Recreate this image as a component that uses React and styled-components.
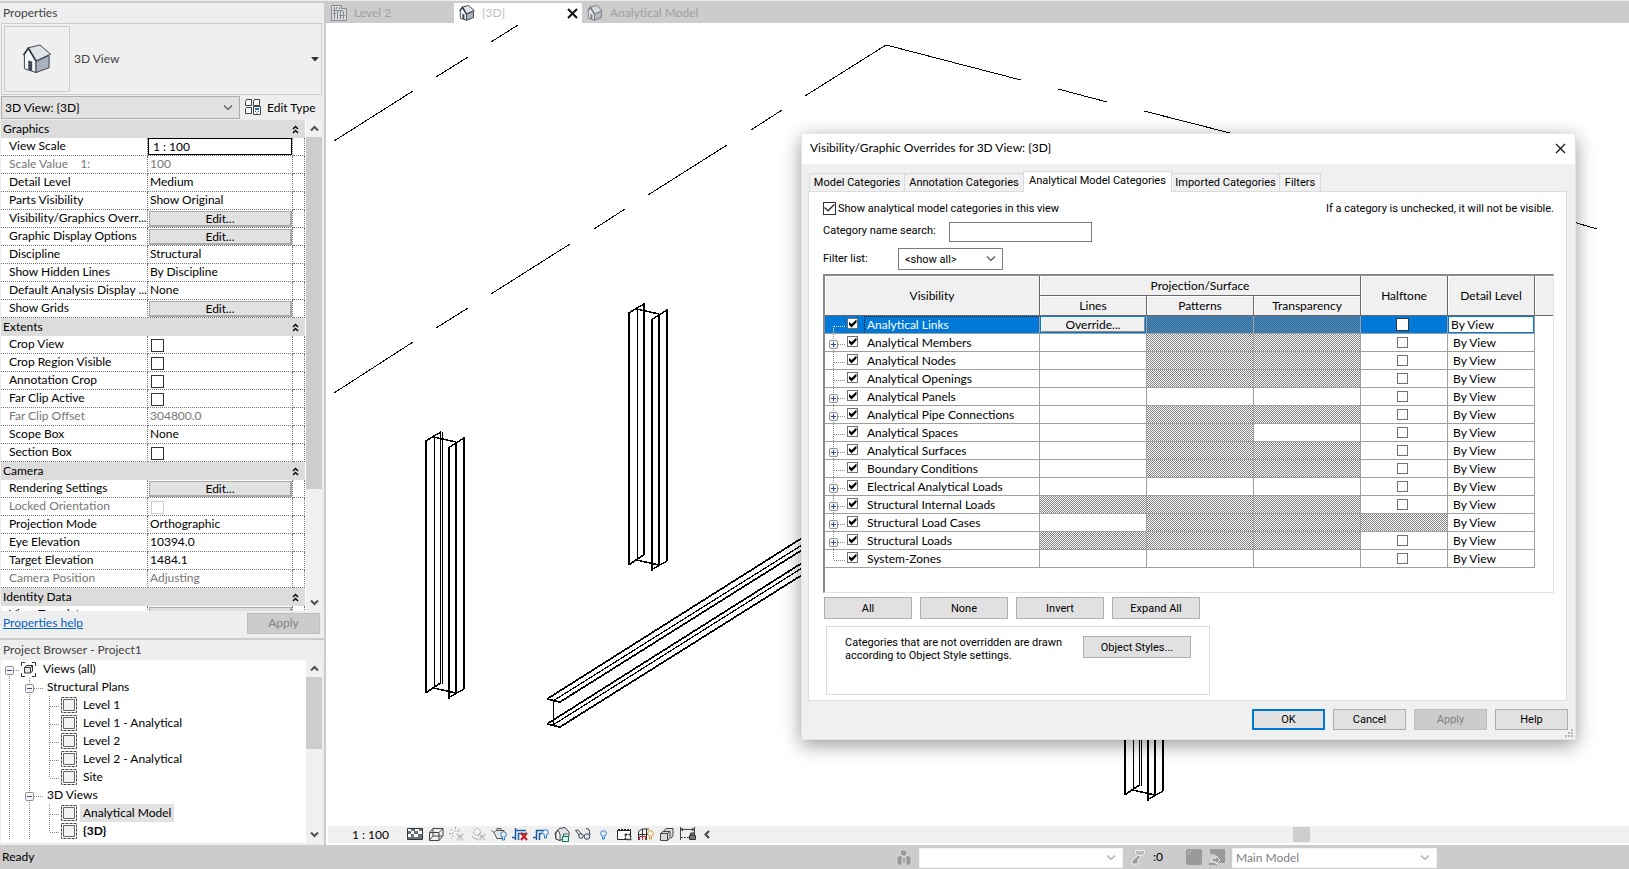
import React, { useState } from 'react';
import styled, { createGlobalStyle, css } from 'styled-components';

const uiFont = '12px/16px Lato, "Open Sans", "Noto Sans", sans-serif';
const dialogFont = '11px/13px Roboto, "Noto Sans", sans-serif';

const GlobalStyle = createGlobalStyle`
  * {
    box-sizing: border-box;
  }

  body {
    margin: 0;
    overflow: hidden;
    font: ${uiFont};
    color: #000;
  }

  button,
  input,
  select {
    margin: 0;
    padding: 0;
    border-radius: 0;
    font: inherit;
    color: inherit;
  }

  svg {
    display: block;
    flex-shrink: 0;
  }
`;

const Root = styled.div`
  display: flex;
  flex-direction: column;
  height: 100vh;
  background: #ccc;
`;

const TopEdge = styled.div`
  flex: 0 0 3px;
  border-top: 1px solid #ededed;
`;

const Workspace = styled.div`
  display: flex;
  flex: 1;
  min-height: 0;
`;

/* ---------- side panels ---------- */

const Sidebar = styled.aside`
  display: flex;
  flex: 0 0 326px;
  flex-direction: column;
  gap: 2px;
  border-right: 2px solid #ccc;
`;

const Panel = styled.section`
  display: flex;
  flex-direction: column;
  min-height: 0;
  flex: ${(props) => props.$size};
  padding-bottom: ${(props) => (props.$footGap ? 2 : 0)}px;
  background: #eee;
`;

const PanelTitle = styled.h2`
  flex: 0 0 20px;
  margin: 0;
  padding-left: 3px;
  font-size: 12px;
  font-weight: normal;
  line-height: 20px;
  color: #444;
`;

const TypeSelector = styled.button`
  display: flex;
  align-items: center;
  flex: 0 0 72px;
  margin: 0 2px 0 1px;
  padding: 0 2px;
  gap: 4px;
  border: 1px solid #ccc;
  background: #efefef;
  text-align: left;
  color: #444;
`;

const TypePreview = styled.span`
  display: flex;
  align-items: center;
  justify-content: center;
  width: 66px;
  height: 66px;
  border: 1px solid #ccc;
`;

const TypeName = styled.span`
  flex: 1;
`;

const InstanceRow = styled.div`
  display: flex;
  align-items: center;
  flex: 0 0 25px;
  gap: 5px;
  padding-left: 1px;
`;

const ComboBox = styled.span`
  display: grid;
  grid-template-columns: 1fr 18px;
  align-items: center;
  width: ${(props) => props.$width}px;
  height: ${(props) => props.$height}px;

  select {
    grid-area: 1 / 1 / 2 / 3;
    width: 100%;
    height: 100%;
    padding-left: ${(props) => props.$pad || 3}px;
    appearance: none;
    border: 1px solid ${(props) => props.$border};
    background: ${(props) => props.$fill || '#fff'};
    color: ${(props) => props.$color || '#000'};
    opacity: 1;
    outline: none;
  }

  svg {
    grid-area: 1 / 2;
    pointer-events: none;
  }
`;

const FlatButton = styled.button`
  display: flex;
  align-items: center;
  gap: 5px;
  border: 0;
  background: transparent;
`;

const ScrollArea = styled.div`
  display: flex;
  flex: 1;
  min-height: 0;
  padding: 0 2px 0 1px;
`;

const ScrollContent = styled.div`
  flex: 1;
  min-width: 0;
  overflow: hidden;
  background: #fff;
`;

const ScrollBar = styled.div`
  display: flex;
  flex: 0 0 16px;
  flex-direction: column;
  align-items: center;
  background: #f0f0f0;
`;

const ScrollArrow = styled.button`
  display: flex;
  align-items: center;
  justify-content: center;
  width: 100%;
  height: 17px;
  border: 0;
  background: transparent;
`;

const ScrollTrack = styled.div`
  flex: 1;
  width: 100%;
`;

const ScrollThumb = styled.div`
  height: ${(props) => props.$size};
  background: #cdcdcd;
`;

const PropertyTable = styled.table`
  width: 304px;
  table-layout: fixed;
  border-spacing: 0;

  th,
  td {
    height: 18px;
    padding: 0;
    overflow: hidden;
    font-weight: normal;
    text-align: left;
    line-height: 16px;
    white-space: pre;
    vertical-align: top;
  }
`;

const GroupHeader = styled.th`
  background: #dcdcdc;
`;

const GroupHeaderInner = styled.span`
  display: flex;
  align-items: center;
  justify-content: space-between;
  height: 18px;
  padding: 0 6px 0 2px;
`;

const PropertyName = styled.th`
  border-right: 1px dotted #777;
  border-bottom: 1px dotted #777;
  color: ${(props) => (props.$dim ? '#777' : '#000')};

  && {
    padding-left: 8px;
  }
`;

const PropertyCell = styled.td`
  border-right: 1px dotted #777;
  border-bottom: 1px dotted #777;
  color: ${(props) => (props.$dim ? '#777' : '#000')};

  && {
    padding-left: ${(props) => (props.$text ? 2 : 0)}px;
  }
`;

const ScaleInput = styled.input`
  display: block;
  width: 100%;
  height: 17px;
  padding-left: 4px;
  border: 1px solid #000;
  background: #fff;
  outline: none;
`;

const EditButton = styled.button`
  display: block;
  width: 143px;
  height: 16px;
  margin: 1px 0 0 1px;
  border: solid #a9a9a9;
  border-width: 1px 2px 2px 1px;
  background: #e1e1e1;
  line-height: 13px;
`;

const PropertyCheck = styled.input.attrs({ type: 'checkbox' })`
  display: block;
  width: 13px;
  height: 13px;
  margin: 3px 0 0 3px;
  appearance: none;
  border: 1px solid #333;
  background: #fff;

  &:disabled {
    border-color: #ccc;
  }
`;

const PanelFooter = styled.div`
  display: flex;
  align-items: center;
  justify-content: space-between;
  flex: 0 0 27px;
  padding: 0 4px 3px 3px;
`;

const HelpLink = styled.a`
  color: #0563c1;
`;

const TreeRow = styled.div`
  display: flex;
  align-items: center;
  height: 18px;
`;

const TreeToggle = styled.button`
  flex-shrink: 0;
  border: 0;
  background: transparent;
`;

const TreeLabel = styled.span`
  padding: 0 3px;
  line-height: 18px;
  background: ${(props) => (props.$selected ? '#e2e2e2' : 'transparent')};
  font-weight: ${(props) => (props.$bold ? 'bold' : 'normal')};
  margin-left: ${(props) => props.$gap}px;
`;

/* ---------- drawing area ---------- */

const ViewArea = styled.main`
  position: relative;
  display: flex;
  flex: 1;
  flex-direction: column;
  min-width: 0;
  background: #fff;
`;

const ViewTabs = styled.div`
  display: flex;
  flex: 0 0 20px;
  background: #ccc;
`;

const ViewTab = styled.div`
  display: flex;
  align-items: center;
  width: ${(props) => (props.$wide ? 140 : 128)}px;
  padding: 0 4px 0 5px;
  background: ${(props) => (props.$active ? '#fff' : 'transparent')};
`;

const ViewTabButton = styled.button`
  display: flex;
  align-items: center;
  flex: 1;
  gap: 7px;
  border: 0;
  background: transparent;
  color: ${(props) => (props.$active ? '#c0c0c0' : '#a0a0a0')};
  white-space: nowrap;
`;

const Canvas = styled.div`
  flex: 1;
  min-height: 0;
  overflow: hidden;
`;

const ViewControlBar = styled.div`
  display: flex;
  align-items: center;
  flex: 0 0 17px;
  gap: 5px;
  margin: 0 0 2px 2px;
  background: #f0f0f0;
`;

const ViewScale = styled.button`
  width: 74px;
  border: 0;
  background: transparent;
  padding-left: 11px;
`;

const ToolButton = styled.button`
  width: 16px;
  height: 16px;
  border: 0;
  background: transparent;
`;

const HorizontalTrack = styled.div`
  display: flex;
  flex: 1;
  height: 15px;

  &::before {
    content: '';
    width: 63%;
  }
`;

const HorizontalThumb = styled.div`
  width: 17px;
  height: 100%;
  background: #cdcdcd;
`;

/* ---------- status bar ---------- */

const StatusBar = styled.footer`
  display: grid;
  grid-template-columns: 55% 1fr;
  align-items: center;
  flex: 0 0 23px;
  line-height: 24px;
`;

const StatusText = styled.span`
  padding-left: 2px;
`;

const StatusTools = styled.div`
  display: flex;
  align-items: center;
  gap: 7px;
  line-height: 18px;
`;

const SelectionCount = styled.span`
  width: 26px;
`;

/* ---------- dialog ---------- */

const Dialog = styled.div`
  position: absolute;
  top: 130px;
  left: 475px;
  width: 775px;
  padding-bottom: 9px;
  border: 1px solid #e4e4e4;
  background: #f0f0f0;
  box-shadow: 0 5px 18px rgba(0, 0, 0, 0.4);
  font: ${dialogFont};
`;

const DialogTitle = styled.header`
  display: flex;
  align-items: center;
  justify-content: space-between;
  height: 30px;
  padding: 0 9px 2px 8px;
  background: #fff;
  font: ${uiFont};
`;

const DialogTabs = styled.div`
  display: flex;
  align-items: flex-end;
  height: 27px;
  padding-left: 8px;
`;

const DialogTab = styled.button`
  height: ${(props) => (props.$active ? 21 : 18)}px;
  width: ${(props) => props.$width}px;
  border: 1px solid #d9d9d9;
  border-bottom: 0;
  margin-left: -1px;
  background: ${(props) => (props.$active ? '#fff' : '#f0f0f0')};
  margin-bottom: ${(props) => (props.$active ? -1 : 0)}px;
  padding-bottom: ${(props) => (props.$active ? 3 : 0)}px;
  white-space: nowrap;
`;

const DialogPage = styled.div`
  margin: 0 8px 8px 6px;
  padding: 9px 12px 5px 14px;
  border: 1px solid #dcdcdc;
  background: #fff;
`;

const PageRow = styled.div`
  display: flex;
  align-items: center;
  justify-content: ${(props) => (props.$spread ? 'space-between' : 'flex-start')};
  height: ${(props) => props.$height}px;
`;

const CheckLabel = styled.label`
  display: flex;
  align-items: center;
  gap: 2px;
`;

const DialogCheck = styled.input.attrs({ type: 'checkbox' })`
  display: grid;
  place-items: center;
  width: 13px;
  height: 13px;
  appearance: none;
  border: 1px solid #333;
  background: #fff;

  &:checked::after {
    content: '';
    width: 11px;
    height: 9px;
    background: #333;
    clip-path: polygon(0 50%, 9% 38%, 36% 70%, 90% 6%, 100% 14%, 37% 92%);
  }
`;

const FieldLabel = styled.label`
  width: ${(props) => props.$width}px;
  padding-bottom: 2px;
`;

const SearchInput = styled.input.attrs({ type: 'text' })`
  width: 143px;
  height: 20px;
  padding: 0 4px;
  border: 1px solid #7a7a7a;
  background: #fff;
`;

const GridFrame = styled.div`
  height: 319px;
  margin-top: 4px;
  border: 2px solid #8a8a8a;
  border-right: 1px solid #e3e3e3;
  border-bottom: 1px solid #e3e3e3;
  font: ${uiFont};
`;

const CategoryTable = styled.table`
  width: 728px;
  table-layout: fixed;
  border-spacing: 0;

  th,
  td {
    padding: 0;
    font-weight: normal;
    white-space: nowrap;
  }
`;

const HeadCell = styled.th`
  height: 20px;
  border-right: ${(props) => (props.$open ? 0 : 1)}px solid #696969;
  border-bottom: 1px solid #696969;
  background: #f0f0f0;
  box-shadow: inset 1px 1px 0 #fff;
  line-height: 18px;
`;

const hatch = css`
  background: repeating-conic-gradient(#808080 0 25%, ${(props) => (props.$selected ? '#0078d7' : '#fff')} 0 50%) 0 0 / 2px
    2px;
`;

const Cell = styled.td`
  height: 18px;
  border-right: 1px solid #a0a0a0;
  border-bottom: 1px solid #a0a0a0;
  background: ${(props) => (props.$selected ? '#0078d7' : '#fff')};
  ${(props) => props.$hatched && hatch}
`;

const NameRow = styled.div`
  display: flex;
  align-items: center;
  height: 17px;
  color: ${(props) => (props.$selected ? '#fff' : '#000')};
`;

const NameText = styled.span`
  flex: 1;
  height: 17px;
  margin-left: 6px;
  padding-left: 2px;
  line-height: 15px;
  border: ${(props) => (props.$selected ? '1px dotted #222' : '1px solid transparent')};
  border-width: 1px 0 0 1px;
`;

const GridCheck = styled.input.attrs({ type: 'checkbox' })`
  display: grid;
  place-items: center;
  width: ${(props) => (props.$large ? 13 : 11)}px;
  height: ${(props) => (props.$large ? 13 : 11)}px;
  margin: ${(props) => (props.$halftone ? `0 0 0 ${props.$large ? 35 : 36}px` : '0 0 2px')};
  appearance: none;
  border: 1px solid ${(props) => (props.$large ? '#333' : '#707070')};
  background: #fff;

  &:checked::after {
    content: '';
    width: 8px;
    height: 8px;
    background: #000;
    clip-path: polygon(0 25%, 38% 55%, 100% 0, 100% 38%, 38% 100%, 0 62%);
  }
`;

const OverrideButton = styled.button`
  display: block;
  width: 104px;
  height: 15px;
  margin: 0 auto;
  border: 1px solid #fff;
  border-right: 1px solid #888;
  border-bottom: 1px solid #888;
  background: #f0f0f0;
  line-height: 12px;
`;

const DetailText = styled.span`
  display: block;
  padding-left: 5px;
  line-height: 16px;
`;

const DetailSelect = styled.select`
  display: block;
  width: 86px;
  height: 17px;
  padding-left: 2px;
  appearance: none;
  border: 1px solid #0078d7;
  background: #fff;
  outline: none;
`;

const ButtonRow = styled.div`
  display: flex;
  gap: 8px;
  justify-content: ${(props) => (props.$end ? 'flex-end' : 'flex-start')};
  padding: ${(props) => (props.$end ? '0 7px 0 0' : '4px 0 7px 1px')};
`;

const Button = styled.button`
  width: ${(props) => props.$width}px;
  height: ${(props) => props.$height || 22}px;
  border: ${(props) => (props.$primary ? '2px solid #0078d7' : '1px solid #adadad')};
  background: #e1e1e1;

  &:disabled {
    border-color: #bfbfbf;
    background: #ccc;
    color: #838383;
  }
`;

const StyleBox = styled.div`
  display: flex;
  align-items: flex-start;
  gap: 14px;
  width: 384px;
  height: 69px;
  margin-left: 3px;
  padding: 9px 18px 0 18px;
  border: 1px solid #dcdcdc;
`;

const StyleNote = styled.p`
  flex: 1;
  margin: 0;
  white-space: nowrap;
`;

const Grip = styled.div`
  position: absolute;
  right: 2px;
  bottom: 2px;
`;

/* ---------- icons ---------- */

function HouseIcon({ size, faded }) {
  const line = size < 20 ? 1.8 : 1;
  return (
    <svg width={size} height={size} viewBox="0 0 30 31" opacity={faded ? 0.55 : 1} strokeWidth={line}>
      <path d="M2 11 6 5l8 12.500v12L2 25.500z" fill="#f4f5f7" stroke="#3a3f4a" />
      <path d="M14 18 27.500 12v12.500L14 29.500z" fill="#a9b2bf" stroke="#3a3f4a" />
      <path d="M6 4 18 1l11 9.500L14 17.500z" fill="#dfe3e8" stroke="#3a3f4a" strokeLinejoin="round" />
      <path d="M1 11.500 6 4.200l8 13.300" fill="none" stroke="#2d323c" strokeWidth={line + 0.6} />
      <path d="m6 17 4 1.200V28l-4-1.500z" fill="#414957" />
    </svg>
  );
}

function PlanIcon() {
  return (
    <svg width="16" height="16" fill="none" stroke="#8a8d94">
      <path d="M.5 3.500v-3h10v3h5v12H.5z" fill="#d8d9db" />
      <path d="M3.500 2v12M5.500 2v2M8.500 2v2M6.500 6v8M9.500 6v8M12.500 6v8M2 5.500h10M2 8.500h3M8 10.500h6" />
    </svg>
  );
}

function Chevron({ color = '#555' }) {
  return (
    <svg width="12" height="8" fill="none" stroke={color} strokeWidth="1.200">
      <path d="m2 1.500 4 4 4-4" />
    </svg>
  );
}

function ArrowIcon({ down }) {
  return (
    <svg width="9" height="7" fill="none" stroke="#505050" strokeWidth="2">
      <path d={down ? 'm1 1.500 3.500 3.500L8 1.500' : 'M1 5.500 4.500 2 8 5.500'} />
    </svg>
  );
}

function CollapseIcon() {
  return (
    <svg width="7" height="9" fill="none" stroke="#000" strokeWidth="1.400">
      <path d="m1 4 2.500-2.500L6 4M1 8l2.500-2.500L6 8" />
    </svg>
  );
}

function EditTypeIcon() {
  return (
    <svg width="17" height="17" fill="#fafafa" stroke="#3f434b">
      <path d="M.5 2.500l1-2h5v6h-6zM8.500 2.500l1-2h5v6h-6zM.5 9.500l1-1h5v6h-6z" />
      <path d="M8.500 7.500h7v8h-7z" fill="#fff" />
      <path d="M10 10h4" stroke="#1a6fc4" strokeWidth="2" />
      <path d="M10 12.500h1M13 12.500h1M11.500 14h1" />
    </svg>
  );
}

function CloseIcon({ bold }) {
  return (
    <svg width="11" height="11" stroke="#111" strokeWidth={bold ? 2 : 1.2}>
      <path d="m1 1 9 9m0-9-9 9" />
    </svg>
  );
}

function SheetIcon() {
  return (
    <svg width="16" height="16" fill="none" stroke="#444">
      <path d="M.5.500h15v15H.5z" strokeDasharray="3 1" />
      <path d="M2.500 2.500h11v11h-11z" fill="#f2f2f2" stroke="#666" />
    </svg>
  );
}

function ViewsIcon() {
  return (
    <svg width="15" height="15" fill="none" stroke="#333">
      <path d="M.5 4V.5H4M11 .5h3.500V4M.5 11v3.500H4M11 14.500h3.500V11" />
      <path d="M3.500 5.500 5.500 3.500h6v5.500l-2 2h-6zM3.500 5.500h6v5.500M9.500 5.500l2-2" fill="#e6e8eb" />
    </svg>
  );
}

// One cell of the dotted tree outline, with an optional +/- box
function TreeMark({ above, below, right, box, width = 20, color = '#888' }) {
  return (
    <svg width={width} height="18" fill="none" stroke={color}>
      <g strokeDasharray="1 1">
        {above && <path d="M8.500 0v10" />}
        {below && <path d="M8.500 10v8" />}
        {right && <path d={`M9 10.500h${width - 10}`} />}
      </g>
      {box && (
        <g>
          <rect x="4.500" y="6.500" width="8" height="8" rx="1" fill="#f4f4f4" stroke="#8c8c8c" />
          <path d={box === 'plus' ? 'M6 10.500h5M8.500 8v5' : 'M6 10.500h5'} stroke="#2c4c9c" />
        </g>
      )}
    </svg>
  );
}

function Bulb({ x = 0, y = 0, color = '#2a7ac8' }) {
  return (
    <g transform={`translate(${x} ${y})`} stroke={color} fill="#eaf4ff">
      <circle cx="3.500" cy="3.500" r="2.800" />
      <path d="M2.500 6.500v2.500h2V6.500" />
    </g>
  );
}

const tools = [
  {
    name: 'Detail Level',
    art: (
      <>
        <path d="M.5 1.500h15v11H.5z" fill="#fff" stroke="#333" />
        <path d="M1 4h3v3H1zM4 2h4v2H4zM7 4h4v3H7zM4 7h3v3H4zM11 7h4v3h-4zM12 2h3v2h-3zM1 10h14v2H1z" fill="#667180" />
      </>
    ),
  },
  {
    name: 'Visual Style',
    art: <path d="M1.500 5.500 5 1.500h10v7L11 13.500H1.500zM1.500 5.500H11v8M11 5.500l4-4M5 1.500v7.500h10M5 9l-3.500 4" fill="none" stroke="#444" />,
  },
  {
    name: 'Sun Path Off',
    art: (
      <g stroke="#a5a5a5" fill="none">
        <path d="M4 10a4 4 0 0 1 2-6 4 4 0 0 1 4 1M6.500 0v2M0 6.500h2M2 2l1.500 1.500M11 2 9.500 3.500M2 12l1-1" strokeDasharray="2 1" />
        <path d="m8 7 6 6m0-6-6 6" strokeWidth="2" strokeDasharray="1 1" />
      </g>
    ),
  },
  {
    name: 'Shadows Off',
    art: (
      <g stroke="#a5a5a5" fill="none">
        <circle cx="7" cy="5" r="3.500" strokeDasharray="2 1" />
        <path d="M2 9c2 3 4 3 6 3" />
        <path d="m9 7 6 6m0-6-6 6" strokeWidth="2" strokeDasharray="1 1" />
      </g>
    ),
  },
  {
    name: 'Show Rendering Dialog',
    art: (
      <>
        <path d="M.5 3.500 3 5.500l3 6h5l2-8H5L3 5.500M6 3V1.500h4V3" fill="#e3e5e8" stroke="#555" />
        <Bulb x={9} y={4} />
      </>
    ),
  },
  {
    name: 'Crop View',
    art: (
      <>
        <path d="M0 10.500h3M3.500 13V3.500H14M6.500 13V6.500H15M3.500 3.500V1" stroke="#1f5f9f" fill="none" strokeWidth="1.500" />
        <path d="m9 6 6 7m0-7-6 7" stroke="#c6181c" strokeWidth="2" />
      </>
    ),
  },
  {
    name: 'Show Crop Region',
    art: (
      <>
        <path d="M0 10.500h3M3.500 13V3.500H11M6.500 13V6.500H9" stroke="#1f5f9f" fill="none" strokeWidth="1.500" />
        <Bulb x={9} y={2} />
      </>
    ),
  },
  {
    name: 'Unlocked 3D View',
    art: (
      <>
        <path d="m1 6 4-4.500L11 .5 15 5v4L6 13.500 2 12z" fill="#dfe2e6" stroke="#444" />
        <path d="M2 6v6l4 1.500V7.500L4 3z" fill="#fff" stroke="#444" />
        <path d="M8.500 9.500h6v5h-6zM9.500 9V7h4" fill="#d8efea" stroke="#1b6d62" />
      </>
    ),
  },
  {
    name: 'Temporary Hide/Isolate',
    art: (
      <g fill="#d5e7f5" stroke="#3c4450">
        <path d="M4 8 .5 3.500 3 3l5 6M15 8l-1-5.500-3-1" fill="none" />
        <circle cx="6" cy="9" r="2.300" />
        <circle cx="12" cy="9.500" r="2.800" />
      </g>
    ),
  },
  { name: 'Reveal Hidden Elements', art: <Bulb x={4} y={3} /> },
  {
    name: 'Temporary View Properties',
    art: (
      <g fill="#fff" stroke="#222">
        <path d="M.5 3.500h13v9H.5z" />
        <path d="M1 2.500h13" strokeDasharray="2 1" />
        <path d="M8.500 7.500h5v5h-5z" strokeWidth="1.500" strokeDasharray="2 1" />
      </g>
    ),
  },
  {
    name: 'Analytical Model',
    art: (
      <>
        <path d="M.5 13V4.500L4 2h7M4.500 13V2M.5 7.500h11M8.500 13V2" fill="none" stroke="#333" />
        <path d="M1.500 13V9.500h6V13M4.500 9.500V13" fill="none" stroke="#c03030" />
        <Bulb x={9} y={3} color="#e39a1c" />
      </>
    ),
  },
  {
    name: 'Highlight Displacement Sets',
    art: (
      <g fill="#d9dbdf" stroke="#444">
        <path d="M4.500 4.500 7 1.500h7v7l-2 3" />
        <path d="M1.500 6.500 4 4.500h7v6l-2.500 3h-7zM1.500 6.500h7v7M8.500 6.500l2.500-2" />
      </g>
    ),
  },
  {
    name: 'Reveal Constraints',
    art: (
      <>
        <path d="M.5 0v13M14.500 0v6M1 2.500h13M3 1 1 2.500 3 4M12 1l2 1.500L12 4" fill="none" stroke="#444" />
        <path d="M1 10.500h8" stroke="#444" strokeDasharray="2 1" />
        <path d="M9.500 8.500h6v4h-6zM10.500 8V6h4v2" fill="#777" stroke="#333" />
      </>
    ),
  },
  { name: 'Collapse', art: <path d="M8 4 4.500 7.500 8 11" fill="none" stroke="#444" strokeWidth="2" /> },
];

/* ---------- model drawing ---------- */

const gridDashes =
  'M334 141 413 91M436 77l32-20M491 42l27-17M334 393l79-51M436 328l32-20M491 294l79-50M594 229l31-20M648 195l79-50M751 130l31-20M805 96l81-51 135 35M1058 89l49 13M1144 111l86 22M1570 221l27 8';

function SteelColumn({ x, y, length, thinEdge }) {
  return (
    <g transform={`translate(${x} ${y})`}>
      <path d={`M.5 10 16 1M23 17 39 7M8.500 6 31 11M.5 ${length + 10}l15-10M8.500 ${length + 5} 31 ${length + 10}M23 ${length + 15}l16-9`} strokeWidth="1.500" />
      <path d={`M9.500 6v${length}`} />
      {thinEdge ? (
        <path d={`M15.500 1v${length}M17.500 1v${length}`} />
      ) : (
        <path d={`M16 0v${length}`} strokeWidth="2" />
      )}
      <path d={`M1 10v${length}M24 16v${length}M31 11v${length}M39 6v${length}`} strokeWidth="2" />
    </g>
  );
}

function ModelDrawing() {
  return (
    <svg width="1303" height="804" viewBox="326 23 1303 804" fill="none" stroke="#000" shapeRendering="crispEdges">
      <path d={gridDashes} />
      <SteelColumn x={425} y={431} length={252} thinEdge />
      <SteelColumn x={628} y={303} length={252} />
      <SteelColumn x={1124} y={533} length={252} thinEdge />
      <path d="M547 699l255-161M560 702l242-152M547 724l255-161M560 727l242-152M547 699l13 3M547 724l13 3" strokeWidth="1.700" />
      <path d="M553 701l249-156M553 725l249-157M553.500 701v24" strokeWidth="1.200" />
    </svg>
  );
}

/* ---------- data ---------- */

const propertyGroups = [
  {
    title: 'Graphics',
    rows: [
      { name: 'View Scale', kind: 'input', value: '1 : 100' },
      { name: 'Scale Value    1:', value: '100', dim: true },
      { name: 'Detail Level', value: 'Medium' },
      { name: 'Parts Visibility', value: 'Show Original' },
      { name: 'Visibility/Graphics Overr...', kind: 'button', value: 'Edit...' },
      { name: 'Graphic Display Options', kind: 'button', value: 'Edit...' },
      { name: 'Discipline', value: 'Structural' },
      { name: 'Show Hidden Lines', value: 'By Discipline' },
      { name: 'Default Analysis Display ...', value: 'None' },
      { name: 'Show Grids', kind: 'button', value: 'Edit...' },
    ],
  },
  {
    title: 'Extents',
    rows: [
      { name: 'Crop View', kind: 'check' },
      { name: 'Crop Region Visible', kind: 'check' },
      { name: 'Annotation Crop', kind: 'check' },
      { name: 'Far Clip Active', kind: 'check' },
      { name: 'Far Clip Offset', value: '304800.0', dim: true },
      { name: 'Scope Box', value: 'None' },
      { name: 'Section Box', kind: 'check' },
    ],
  },
  {
    title: 'Camera',
    rows: [
      { name: 'Rendering Settings', kind: 'button', value: 'Edit...' },
      { name: 'Locked Orientation', kind: 'check', dim: true },
      { name: 'Projection Mode', value: 'Orthographic' },
      { name: 'Eye Elevation', value: '10394.0' },
      { name: 'Target Elevation', value: '1484.1' },
      { name: 'Camera Position', value: 'Adjusting', dim: true },
    ],
  },
  {
    title: 'Identity Data',
    rows: [{ name: 'View Template', kind: 'button', value: '<None>' }],
  },
];

const browserTree = [
  {
    name: 'Structural Plans',
    views: ['Level 1', 'Level 1 - Analytical', 'Level 2', 'Level 2 - Analytical', 'Site'],
  },
  { name: '3D Views', views: ['Analytical Model', '{3D}'] },
];

const dialogTabs = [
  { name: 'Model Categories', width: 96 },
  { name: 'Annotation Categories', width: 120 },
  { name: 'Analytical Model Categories', width: 149 },
  { name: 'Imported Categories', width: 109 },
  { name: 'Filters', width: 42 },
];

// off: columns that cannot be overridden (l = lines, p = patterns, t = transparency, h = halftone)
const categories = [
  { name: 'Analytical Links', off: 'pt' },
  { name: 'Analytical Members', off: 'pt', nested: true },
  { name: 'Analytical Nodes', off: 'pt' },
  { name: 'Analytical Openings', off: 'pt' },
  { name: 'Analytical Panels', off: '', nested: true },
  { name: 'Analytical Pipe Connections', off: 'pt', nested: true },
  { name: 'Analytical Spaces', off: 'p' },
  { name: 'Analytical Surfaces', off: 'pt', nested: true },
  { name: 'Boundary Conditions', off: 'pt' },
  { name: 'Electrical Analytical Loads', off: '', nested: true },
  { name: 'Structural Internal Loads', off: 'lpt', nested: true },
  { name: 'Structural Load Cases', off: 'pth', nested: true },
  { name: 'Structural Loads', off: 'lpt', nested: true },
  { name: 'System-Zones', off: '' },
];

/* ---------- parts ---------- */

function Scroller({ size, children }) {
  return (
    <ScrollArea>
      <ScrollContent>{children}</ScrollContent>
      <ScrollBar>
        <ScrollArrow aria-label="Scroll up">
          <ArrowIcon />
        </ScrollArrow>
        <ScrollTrack>
          <ScrollThumb $size={size} />
        </ScrollTrack>
        <ScrollArrow aria-label="Scroll down">
          <ArrowIcon down />
        </ScrollArrow>
      </ScrollBar>
    </ScrollArea>
  );
}

function PropertyValue({ row }) {
  if (row.kind === 'input') return <ScaleInput aria-label={row.name} defaultValue={row.value} />;
  if (row.kind === 'button') return <EditButton aria-label={`${row.name} ${row.value}`}>{row.value}</EditButton>;
  if (row.kind === 'check') return <PropertyCheck aria-label={row.name} disabled={row.dim} />;
  return row.value;
}

function PropertiesPanel() {
  return (
    <Panel $size="0 0 635px">
      <PanelTitle>Properties</PanelTitle>
      <TypeSelector>
        <TypePreview>
          <HouseIcon size={30} />
        </TypePreview>
        <TypeName>3D View</TypeName>
        <svg width="8" height="5">
          <path d="M0 0h8L4 4.500z" fill="#333" />
        </svg>
      </TypeSelector>
      <InstanceRow>
        <ComboBox $width={239} $height={23} $border="#adadad" $fill="#e1e1e1">
          <select aria-label="View">
            <option>3D View: {'{3D}'}</option>
          </select>
          <Chevron />
        </ComboBox>
        <FlatButton>
          <EditTypeIcon />
          Edit Type
        </FlatButton>
      </InstanceRow>
      <Scroller size="77%">
        <PropertyTable>
          <colgroup>
            <col width="147" />
            <col width="145" />
            <col width="12" />
          </colgroup>
          {propertyGroups.map((group) => (
            <tbody key={group.title}>
              <tr>
                <GroupHeader colSpan="3">
                  <GroupHeaderInner>
                    {group.title}
                    <CollapseIcon />
                  </GroupHeaderInner>
                </GroupHeader>
              </tr>
              {group.rows.map((row) => (
                <tr key={row.name}>
                  <PropertyName $dim={row.dim}>{row.name}</PropertyName>
                  <PropertyCell $dim={row.dim} $text={!row.kind}>
                    <PropertyValue row={row} />
                  </PropertyCell>
                  <PropertyCell />
                </tr>
              ))}
            </tbody>
          ))}
        </PropertyTable>
      </Scroller>
      <PanelFooter>
        <HelpLink href="#help">Properties help</HelpLink>
        <Button $width={73} $height={21} disabled>
          Apply
        </Button>
      </PanelFooter>
    </Panel>
  );
}

function ProjectBrowser() {
  return (
    <Panel $size="1" $footGap>
      <PanelTitle>Project Browser - Project1</PanelTitle>
      <Scroller size="48%">
        <TreeRow>
          <TreeToggle aria-label="Collapse Views (all)">
            <TreeMark below right box="minus" />
          </TreeToggle>
          <ViewsIcon />
          <TreeLabel $gap={4}>Views (all)</TreeLabel>
        </TreeRow>
        {browserTree.map((group) => (
          <React.Fragment key={group.name}>
            <TreeRow>
              <TreeMark above below />
              <TreeToggle aria-label={`Collapse ${group.name}`}>
                <TreeMark above below right box="minus" width={23} />
              </TreeToggle>
              <TreeLabel $gap={0}>{group.name}</TreeLabel>
            </TreeRow>
            {group.views.map((view, i) => (
              <TreeRow key={view}>
                <TreeMark above below />
                <TreeMark above below />
                <TreeMark above below={i < group.views.length - 1} right />
                <SheetIcon />
                <TreeLabel $gap={3} $selected={view === 'Analytical Model'} $bold={view === '{3D}'}>
                  {view}
                </TreeLabel>
              </TreeRow>
            ))}
          </React.Fragment>
        ))}
      </Scroller>
    </Panel>
  );
}

function CategoryRow({ category, first, last, selected }) {
  const [visible, setVisible] = useState(true);
  const mark = (
    <TreeMark
      above={!first}
      below={!last}
      right
      width={22}
      box={category.nested && 'plus'}
      color={selected ? '#fff' : '#888'}
    />
  );

  return (
    <tr>
      <Cell $selected={selected}>
        <NameRow $selected={selected}>
          {category.nested ? <TreeToggle aria-label={`Expand ${category.name}`}>{mark}</TreeToggle> : mark}
          <GridCheck
            aria-label={`${category.name} visible`}
            checked={visible}
            onChange={() => setVisible(!visible)}
          />
          <NameText $selected={selected}>{category.name}</NameText>
        </NameRow>
      </Cell>
      <Cell $selected={selected} $hatched={category.off.includes('l')}>
        {selected && <OverrideButton>Override...</OverrideButton>}
      </Cell>
      <Cell $selected={selected} $hatched={category.off.includes('p')} />
      <Cell $selected={selected} $hatched={category.off.includes('t')} />
      <Cell $selected={selected} $hatched={category.off.includes('h')}>
        {!category.off.includes('h') && (
          <GridCheck $halftone $large={selected} aria-label={`${category.name} halftone`} />
        )}
      </Cell>
      <Cell>
        {selected ? (
          <DetailSelect aria-label={`${category.name} detail level`}>
            <option>By View</option>
          </DetailSelect>
        ) : (
          <DetailText>By View</DetailText>
        )}
      </Cell>
    </tr>
  );
}

function OverridesDialog() {
  const [tab, setTab] = useState('Analytical Model Categories');

  return (
    <Dialog role="dialog" aria-labelledby="dialog-title">
      <DialogTitle>
        <span id="dialog-title">Visibility/Graphic Overrides for 3D View: {'{3D}'}</span>
        <FlatButton aria-label="Close">
          <CloseIcon />
        </FlatButton>
      </DialogTitle>
      <DialogTabs role="tablist">
        {dialogTabs.map(({ name, width }) => (
          <DialogTab
            key={name}
            role="tab"
            aria-selected={name === tab}
            $active={name === tab}
            $width={width}
            onClick={() => setTab(name)}
          >
            {name}
          </DialogTab>
        ))}
      </DialogTabs>
      <DialogPage>
        <PageRow $spread $height={14}>
          <CheckLabel>
            <DialogCheck defaultChecked />
            Show analytical model categories in this view
          </CheckLabel>
          <span>If a category is unchecked, it will not be visible.</span>
        </PageRow>
        <PageRow $height={33}>
          <FieldLabel htmlFor="category-search" $width={126}>
            Category name search:
          </FieldLabel>
          <SearchInput id="category-search" />
        </PageRow>
        <PageRow $height={22}>
          <FieldLabel htmlFor="filter-list" $width={75}>
            Filter list:
          </FieldLabel>
          <ComboBox $width={105} $height={22} $border="#7a7a7a" $pad={6}>
            <select id="filter-list">
              <option>&lt;show all&gt;</option>
            </select>
            <Chevron />
          </ComboBox>
        </PageRow>
        <GridFrame>
          <CategoryTable>
            <colgroup>
              <col width="215" />
              <col width="107" />
              <col width="107" />
              <col width="107" />
              <col width="87" />
              <col width="87" />
              <col width="18" />
            </colgroup>
            <thead>
              <tr>
                <HeadCell rowSpan="2">Visibility</HeadCell>
                <HeadCell colSpan="3">Projection/Surface</HeadCell>
                <HeadCell rowSpan="2">Halftone</HeadCell>
                <HeadCell rowSpan="2">Detail Level</HeadCell>
                <HeadCell rowSpan="2" $open />
              </tr>
              <tr>
                <HeadCell>Lines</HeadCell>
                <HeadCell>Patterns</HeadCell>
                <HeadCell>Transparency</HeadCell>
              </tr>
            </thead>
            <tbody>
              {categories.map((category, i) => (
                <CategoryRow
                  key={category.name}
                  category={category}
                  first={i === 0}
                  last={i === categories.length - 1}
                  selected={i === 0}
                />
              ))}
            </tbody>
          </CategoryTable>
        </GridFrame>
        <ButtonRow>
          <Button $width={88}>All</Button>
          <Button $width={88}>None</Button>
          <Button $width={88}>Invert</Button>
          <Button $width={88}>Expand All</Button>
        </ButtonRow>
        <StyleBox>
          <StyleNote>
            Categories that are not overridden are drawn
            <br />
            according to Object Style settings.
          </StyleNote>
          <Button $width={108}>Object Styles...</Button>
        </StyleBox>
      </DialogPage>
      <ButtonRow $end>
        <Button $width={73} $height={21} $primary>
          OK
        </Button>
        <Button $width={73} $height={21}>
          Cancel
        </Button>
        <Button $width={73} $height={21} disabled>
          Apply
        </Button>
        <Button $width={73} $height={21}>
          Help
        </Button>
      </ButtonRow>
      <Grip>
        <svg width="8" height="8" fill="#b8b8b8">
          <path d="M6 0h2v2H6zM3 3h2v2H3zM6 3h2v2H6zM0 6h2v2H0zM3 6h2v2H3zM6 6h2v2H6z" />
        </svg>
      </Grip>
    </Dialog>
  );
}

export default function App() {
  return (
    <Root>
      <GlobalStyle />
      <TopEdge />
      <Workspace>
        <Sidebar>
          <PropertiesPanel />
          <ProjectBrowser />
        </Sidebar>
        <ViewArea>
          <ViewTabs>
            <ViewTab>
              <ViewTabButton>
                <PlanIcon />
                Level 2
              </ViewTabButton>
            </ViewTab>
            <ViewTab $active>
              <ViewTabButton $active>
                <HouseIcon size={16} />
                {'{3D}'}
              </ViewTabButton>
              <FlatButton aria-label="Close view">
                <CloseIcon bold />
              </FlatButton>
            </ViewTab>
            <ViewTab $wide>
              <ViewTabButton>
                <HouseIcon size={16} faded />
                Analytical Model
              </ViewTabButton>
            </ViewTab>
          </ViewTabs>
          <Canvas>
            <ModelDrawing />
          </Canvas>
          <ViewControlBar>
            <ViewScale>1 : 100</ViewScale>
            {tools.map((tool) => (
              <ToolButton key={tool.name} aria-label={tool.name}>
                <svg width="16" height="16">
                  {tool.art}
                </svg>
              </ToolButton>
            ))}
            <HorizontalTrack>
              <HorizontalThumb />
            </HorizontalTrack>
          </ViewControlBar>
          <OverridesDialog />
        </ViewArea>
      </Workspace>
      <StatusBar>
        <StatusText>Ready</StatusText>
        <StatusTools>
          <svg width="16" height="16" fill="#9a9a9a" stroke="#eee" strokeWidth=".6">
            <path d="M5 1h5l1 3-1 3H6L4 4zM1 8l3-2 3 2v8H1zM9 8l3-2 3 2v8H9zM6 8h4v7H6z" />
          </svg>
          <ComboBox $width={204} $height={18} $border="#f4f4f4">
            <select aria-label="Active workset" disabled />
            <Chevron color="#aaa" />
          </ComboBox>
          <svg width="16" height="16" fill="#bbb" stroke="#eee">
            <path d="M5.500 1.500h9v3l-2 2h-5l-2-2z" />
            <path d="M8 6.500h3L8 11v4H2v-3z" fill="#9a9a9a" />
          </svg>
          <SelectionCount>:0</SelectionCount>
          <svg width="16" height="16">
            <rect width="16" height="16" rx="2" fill="#9a9a9a" />
            <path d="M2 4h1M4 2h1" stroke="#eee" />
          </svg>
          <svg width="16" height="16" fill="#9a9a9a">
            <path d="M1 0h15v14H9V8L5 5H1zM0 14h8v2H0z" />
            <path d="M3 9h4V7l4 4-4 4v-2H3z" stroke="#eee" />
          </svg>
          <ComboBox $width={205} $height={18} $border="#f4f4f4" $color="#808080">
            <select aria-label="Design option" disabled>
              <option>Main Model</option>
            </select>
            <Chevron color="#aaa" />
          </ComboBox>
        </StatusTools>
      </StatusBar>
    </Root>
  );
}
